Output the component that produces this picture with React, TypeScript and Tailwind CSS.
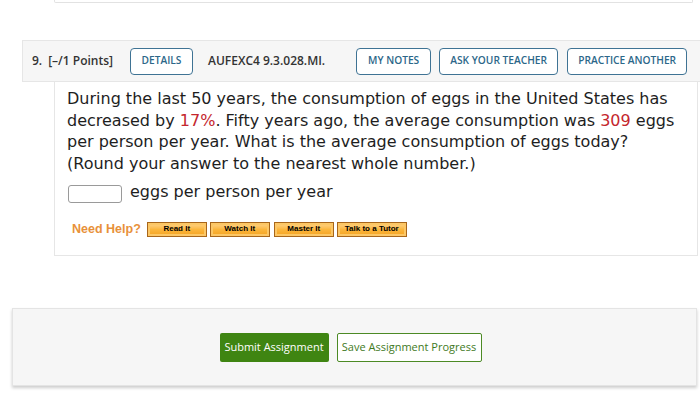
import React from "react";

const hdrBtn =
  "h-[27px] flex items-center justify-center whitespace-nowrap border-[1.5px] border-[#3f7394] rounded-[4px] text-[#2c6789] text-[10.2px] font-semibold bg-white";

const helpBtn =
  "h-[15px] flex items-center justify-center whitespace-nowrap border border-[#a8661a] bg-gradient-to-b from-[#ffd68a] via-[#fbb63c] to-[#f4a21e] shadow-[inset_0_0_0_2px_#fcc766] text-[8px] font-bold text-black";

export default function App() {
  return (
    <div className="w-[700px] h-[396px] bg-white overflow-hidden relative" style={{ fontFamily: "'Open Sans', sans-serif" }}>
      <div className="ml-[54px] w-[639px] h-[3px] border-x border-b border-[#e2e2e2] rounded-b-[2px]" />

      <div className="mt-[37px] ml-[22px] w-[690px] h-[42px] bg-[#f6f6f6] border border-[#e6e6e6] flex items-center whitespace-nowrap">
        <span className="ml-[9px] text-[12px] font-semibold text-[#333]">9.</span>
        <span className="ml-[6px] text-[12px] font-semibold text-[#333]">[–/1 Points]</span>
        <div className={hdrBtn + " ml-[17px] w-[63px]"}>DETAILS</div>
        <span className="ml-[15px] text-[12px] font-semibold text-[#333]">AUFEXC4 9.3.028.MI.</span>
        <div className={hdrBtn + " ml-[31px] w-[75px]"}>MY NOTES</div>
        <div className={hdrBtn + " ml-[8px] w-[119px]"}>ASK YOUR TEACHER</div>
        <div className={hdrBtn + " ml-[9px] w-[120px]"}>PRACTICE ANOTHER</div>
      </div>

      <div className="ml-[54px] w-[644px] h-[174px] border-l border-r border-b border-[#e6e6e6] pl-[12px] pt-[6px]">
        <p
          className="text-[16px] leading-[21.7px] text-[#1e1e1e] w-[614px]"
          style={{ fontFamily: "'DejaVu Sans', Verdana, sans-serif" }}
        >
          During the last 50 years, the consumption of eggs in the United States has decreased by{" "}
          <span className="text-[#c4262e]">17%</span>. Fifty years ago, the average consumption was{" "}
          <span className="text-[#c4262e]">309</span> eggs per person per year. What is the average consumption of eggs
          today? (Round your answer to the nearest whole number.)
        </p>
        <div className="mt-[6px] flex items-center" style={{ fontFamily: "'DejaVu Sans', Verdana, sans-serif" }}>
          <div className="ml-[1px] mt-[4px] w-[54px] h-[18px] border border-[#9a9a9a] rounded-[3px] bg-white" />
          <span className="ml-[8px] text-[16px] leading-[20px] text-[#1e1e1e]">eggs per person per year</span>
        </div>
        <div className="mt-[17px] flex items-center" style={{ fontFamily: "'Liberation Sans', Arial, sans-serif" }}>
          <span className="ml-[5px] text-[12.5px] font-bold text-[#e8913a]">Need Help?</span>
          <div className={helpBtn + " ml-[6px] w-[60px]"}>Read It</div>
          <div className={helpBtn + " ml-[3px] w-[60px]"}>Watch It</div>
          <div className={helpBtn + " ml-[4px] w-[60px]"}>Master It</div>
          <div className={helpBtn + " ml-[3px] w-[70px]"}>Talk to a Tutor</div>
        </div>
      </div>

      <div className="mt-[52px] ml-[12px] w-[685px] h-[78px] bg-[#f6f6f6] border border-[#e4e4e4] shadow-[0_2px_3px_rgba(0,0,0,0.2)] flex items-center justify-center">
        <div className="flex items-center gap-[8px] ml-[-8px]">
          <div className="w-[109px] h-[29px] bg-[#3f8512] rounded-[2px] flex items-center justify-center whitespace-nowrap text-white text-[11px]">
            Submit Assignment
          </div>
          <div className="w-[145px] h-[29px] bg-white border-[1.5px] border-[#4c8a25] rounded-[2px] flex items-center justify-center whitespace-nowrap text-[#3f7a1e] text-[11px]">
            Save Assignment Progress
          </div>
        </div>
      </div>
    </div>
  );
}
